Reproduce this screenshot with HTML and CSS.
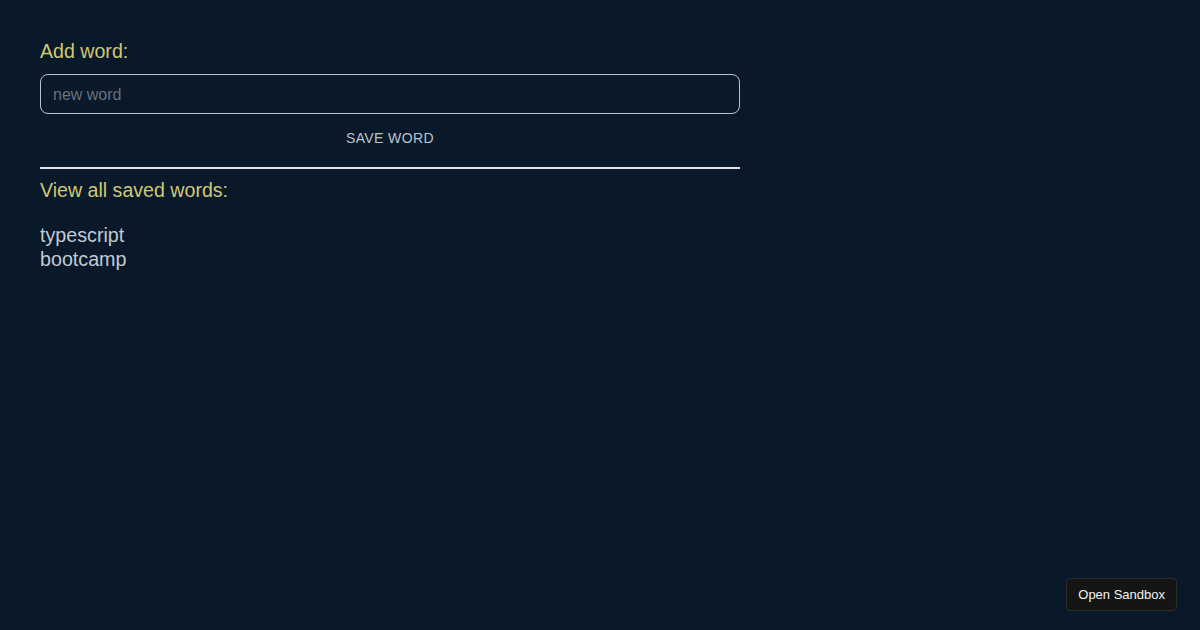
FILE: index.html
```html
<!DOCTYPE html>
<html>
<head>
<meta charset="utf-8">
<link rel="stylesheet" href="styles.css">
</head>
<body>
<main class="app">
  <section class="add">
    <label class="heading" for="word">Add word:</label>
    <input id="word" class="word-input" type="text" placeholder="new word">
    <div class="actions"><button class="save">Save word</button></div>
  </section>
  <hr class="divider">
  <section class="list">
    <h2 class="heading">View all saved words:</h2>
    <ul class="words">
      <li>typescript</li>
      <li>bootcamp</li>
    </ul>
  </section>
</main>
<button class="sandbox">Open Sandbox</button>
</body>
</html>
```

FILE: styles.css
```css
html, body {
  margin: 0;
  height: 100%;
  background: #0a1929;
  font-family: "Liberation Sans", Arial, sans-serif;
}
.app {
  width: 700px;
  padding: 40px 0 0 40px;
}
.heading {
  display: block;
  margin: 0;
  font-size: 19.6px;
  font-weight: normal;
  line-height: 23px;
  color: #cfc873;
}
.word-input {
  display: block;
  box-sizing: border-box;
  width: 700px;
  height: 40px;
  margin-top: 11px;
  padding: 1px 12px 0;
  background: transparent;
  border: 1px solid #b9c2cc;
  border-radius: 8px;
  font-family: "Liberation Sans", Arial, sans-serif;
  font-size: 16px;
  color: #c7cfd8;
  outline: none;
}
.word-input::placeholder {
  color: #66727f;
}
.actions {
  display: flex;
  justify-content: center;
  padding-top: 4px;
}
.save {
  height: 38px;
  padding: 1px 12px 0;
  background: transparent;
  border: 0;
  font-family: "Liberation Sans", Arial, sans-serif;
  font-size: 14px;
  letter-spacing: 0.4px;
  text-transform: uppercase;
  color: #b8c4d0;
}
.divider {
  margin: 11px 0 0;
  border: 0;
  height: 2px;
  background: #dfe3e8;
}
.list .heading {
  margin-top: 10px;
}
.words {
  list-style: none;
  margin: 21px 0 0;
  padding: 0;
  font-size: 19.7px;
  line-height: 24px;
  color: #c2cad3;
}
.sandbox {
  position: fixed;
  right: 23px;
  bottom: 19px;
  height: 33px;
  padding: 0 11px;
  background: #151515;
  border: 1px solid #2e2e2e;
  border-radius: 4px;
  font-family: "Liberation Sans", Arial, sans-serif;
  font-size: 13px;
  color: #f2f2f2;
}
```
